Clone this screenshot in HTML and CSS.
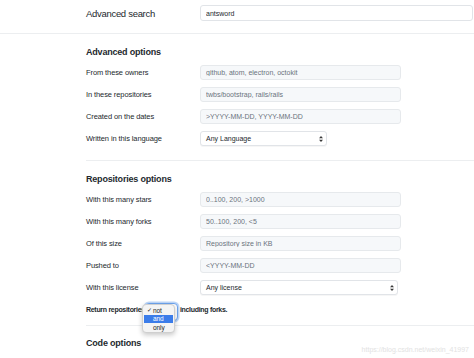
FILE: index.html
```html
<!DOCTYPE html>
<html lang="en">
<head>
  <meta charset="UTF-8" />
  <meta name="viewport" content="width=device-width, initial-scale=1.0" />
  <title>Advanced search</title>
  <link rel="stylesheet" href="styles.css">
</head>
<body>

  <!-- Search bar -->
  <div class="search-bar">
    <label class="search-label">Advanced search</label>
    <input class="search-input" type="text" value="antsword" />
  </div>

  <!-- Advanced options -->
  <section class="group">
    <h2>Advanced options</h2>
    <div class="row">
      <label>From these owners</label>
      <input class="field" type="text" placeholder="github, atom, electron, octokit" />
    </div>
    <div class="row">
      <label>In these repositories</label>
      <input class="field" type="text" placeholder="twbs/bootstrap, rails/rails" />
    </div>
    <div class="row">
      <label>Created on the dates</label>
      <input class="field" type="text" placeholder="&gt;YYYY-MM-DD, YYYY-MM-DD" />
    </div>
    <div class="row">
      <label>Written in this language</label>
      <div class="select select-short">
        <span>Any Language</span>
        <svg width="4" height="6" viewBox="0 0 4 6"><path d="M2 0L4 2.3H0Z M2 6L0 3.7H4Z" fill="#3a3a3a"/></svg>
      </div>
    </div>
  </section>

  <!-- Repositories options -->
  <section class="group group-repos">
    <h2>Repositories options</h2>
    <div class="row">
      <label>With this many stars</label>
      <input class="field" type="text" placeholder="0..100, 200, &gt;1000" />
    </div>
    <div class="row">
      <label>With this many forks</label>
      <input class="field" type="text" placeholder="50..100, 200, &lt;5" />
    </div>
    <div class="row">
      <label>Of this size</label>
      <input class="field" type="text" placeholder="Repository size in KB" />
    </div>
    <div class="row">
      <label>Pushed to</label>
      <input class="field" type="text" placeholder="&lt;YYYY-MM-DD" />
    </div>
    <div class="row">
      <label>With this license</label>
      <div class="select select-long">
        <span>Any license</span>
        <svg width="4" height="6" viewBox="0 0 4 6"><path d="M2 0L4 2.3H0Z M2 6L0 3.7H4Z" fill="#3a3a3a"/></svg>
      </div>
    </div>
    <div class="return-row">
      <span>Return repositories</span>
      <div class="mini-select">
        <!-- open dropdown -->
        <ul class="menu">
          <li class="checked">not</li>
          <li class="active">and</li>
          <li>only</li>
        </ul>
      </div>
      <span>including forks.</span>
    </div>
  </section>

  <!-- Code options -->
  <section class="group group-code">
    <h2>Code options</h2>
  </section>

  <span class="watermark">https://blog.csdn.net/weixin_41997</span>

</body>
</html>
```

FILE: styles.css
```css
body {
  margin: 0;
  width: 474px;
  height: 358px;
  overflow: hidden;
  position: relative;
  font-family: "Liberation Sans", Arial, sans-serif;
  color: #24292e;
  background: #ffffff;
}

/* top search bar */
.search-bar {
  display: flex;
  align-items: center;
  padding: 5px 0 12px 86px;
  border-bottom: 1px solid #eceef0;
}

.search-label {
  width: 114px;
  font-size: 9.5px;
  letter-spacing: -0.3px;
}

.search-input {
  width: 273px;
  height: 16px;
  box-sizing: border-box;
  margin: 0;
  padding: 0 5px;
  border: 1px solid #e1e4e8;
  border-radius: 3px;
  background: #ffffff;
  font-family: inherit;
  font-size: 7px;
  color: #24292e;
  outline: none;
}

/* option groups */
.group {
  margin-left: 86px;
  padding: 12px 0 14px;
  border-bottom: 1px solid #eceef0;
}

.group-repos {
  padding-bottom: 8px;
}

.group-code {
  padding-top: 11px;
  border-bottom: none;
}

.group h2 {
  margin: 0 0 7px;
  font-size: 9px;
  line-height: 12px;
  letter-spacing: -0.2px;
  font-weight: bold;
}

.row {
  display: flex;
  align-items: center;
  height: 15px;
  margin-bottom: 7px;
}

.row:last-child {
  margin-bottom: 0;
}

.row label {
  width: 114px;
  font-size: 7.5px;
  letter-spacing: -0.1px;
}

.field {
  width: 201px;
  height: 15px;
  box-sizing: border-box;
  margin: 0;
  padding: 0 5px;
  border: 1px solid #e6e9ec;
  border-radius: 3px;
  background: #f6f8fa;
  font-family: inherit;
  font-size: 7px;
  color: #24292e;
  outline: none;
}

.field::placeholder {
  color: #6a737d;
}

.select {
  display: flex;
  justify-content: space-between;
  align-items: center;
  height: 15px;
  box-sizing: border-box;
  padding: 0 3px 0 5px;
  border: 1px solid #e1e4e8;
  border-radius: 3px;
  background: #ffffff;
  box-shadow: 0 1px 0 rgba(27, 31, 35, 0.04);
  font-size: 7px;
}

.select-short {
  width: 127px;
}

.select-long {
  width: 198px;
}

/* "return repositories ... including forks" line */
.return-row {
  display: flex;
  align-items: center;
  height: 15px;
  font-size: 7px;
  font-weight: bold;
  letter-spacing: -0.3px;
}

.mini-select {
  position: relative;
  align-self: flex-start;
  width: 33px;
  height: 18px;
  box-sizing: border-box;
  margin: 1px 2px 0 0;
  border: 1px solid #6ea4ee;
  border-radius: 4px;
  box-shadow: 0 0 0 1.5px rgba(70, 140, 235, 0.35);
  background: #ffffff;
}

.menu {
  position: absolute;
  left: -4px;
  top: 0;
  width: 33px;
  margin: 0;
  padding: 1px 1px 0;
  box-sizing: border-box;
  list-style: none;
  background: #f4f4f4;
  border: 1px solid #cfcfcf;
  border-radius: 4px;
  box-shadow: 0 2px 5px rgba(0, 0, 0, 0.22);
  font-size: 6.5px;
  font-weight: normal;
  letter-spacing: 0;
}

.menu li {
  position: relative;
  height: 9px;
  line-height: 9px;
  padding-left: 9px;
  color: #222222;
}

.menu li.checked::before {
  content: "\2713";
  position: absolute;
  left: 3px;
  font-size: 6px;
}

.menu li.active {
  background: #3b7ce9;
  color: #ffffff;
  height: 8px;
  line-height: 8px;
}

.watermark {
  position: absolute;
  right: 5px;
  bottom: 5px;
  font-size: 7px;
  color: #e2e2e2;
}
```
